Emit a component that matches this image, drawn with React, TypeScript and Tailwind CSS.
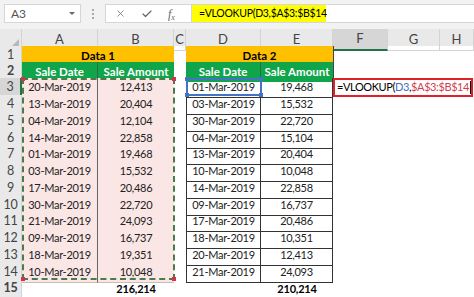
import { Check, X } from "lucide-react";

const COLS = "grid grid-cols-[22px_76px_76px_12px_75px_72px_55px_52px_1fr]";

const data1 = [
  ["20-Mar-2019", "12,413"],
  ["13-Mar-2019", "20,404"],
  ["04-Mar-2019", "12,104"],
  ["14-Mar-2019", "22,858"],
  ["01-Mar-2019", "19,468"],
  ["03-Mar-2019", "15,532"],
  ["17-Mar-2019", "20,486"],
  ["30-Mar-2019", "22,720"],
  ["21-Mar-2019", "24,093"],
  ["09-Mar-2019", "16,737"],
  ["18-Mar-2019", "19,351"],
  ["10-Mar-2019", "10,048"],
];

const data2 = [
  ["01-Mar-2019", "19,468"],
  ["03-Mar-2019", "15,532"],
  ["30-Mar-2019", "22,720"],
  ["04-Mar-2019", "15,104"],
  ["13-Mar-2019", "20,404"],
  ["10-Mar-2019", "10,048"],
  ["14-Mar-2019", "22,858"],
  ["09-Mar-2019", "16,737"],
  ["17-Mar-2019", "20,486"],
  ["18-Mar-2019", "10,351"],
  ["20-Mar-2019", "12,413"],
  ["21-Mar-2019", "24,093"],
];

function RowHead({ n, active }: { n: number; active?: boolean }) {
  return (
    <div
      className={
        "flex items-center justify-center border-b border-r border-[#d4d4d4] text-[12.5px] text-[#444] " +
        (active ? "bg-[#d6d6d6] border-r-2 border-r-[#217346]" : "bg-[#e9e9e9]")
      }
    >
      {n}
    </div>
  );
}

function FormulaBar() {
  return (
    <div className="flex h-[29px] items-start bg-[#f2f2f2] pt-[4px]">
      <div className="ml-[4px] flex h-[19px] w-[77px] items-center justify-between border border-[#d6d6d6] bg-white pl-[6px] pr-[5px] text-[12px] text-[#555]">
        <span>A3</span>
        <span className="h-0 w-0 border-x-[3px] border-t-[3px] border-x-transparent border-t-[#666]" />
      </div>
      <div className="ml-[10px] flex h-[19px] w-[4px] flex-col items-center justify-center gap-[2px]">
        <span className="h-[2px] w-[2px] bg-[#aaa]" />
        <span className="h-[2px] w-[2px] bg-[#aaa]" />
        <span className="h-[2px] w-[2px] bg-[#aaa]" />
      </div>
      <div className="ml-[10px] flex h-[19px] w-[87px] items-center border border-[#d6d6d6] bg-white text-[#666]">
        <X className="ml-[9px]" size={11} strokeWidth={1.6} />
        <Check className="ml-[15px]" size={12} strokeWidth={2.4} />
        <span className="ml-[15px] font-['Liberation_Serif'] text-[12px] italic">
          f<sub className="text-[8px]">x</sub>
        </span>
      </div>
      <div className="flex h-[19px] flex-1 border-y border-[#d6d6d6] bg-white">
        <div className="flex h-full w-[134px] items-center bg-[#ffff00] pl-[7px] text-[10.5px] tracking-[-0.3px] text-black">
          =VLOOKUP(D3,$A$3:$B$14
        </div>
      </div>
    </div>
  );
}

function ColHeaders() {
  const letters = ["A", "B", "C", "D", "E", "F", "G", "H"];
  return (
    <div className={COLS + " h-[17px] bg-[#e9e9e9] text-[13px] text-[#444]"}>
      <div className="relative border-b border-r border-[#d4d4d4]">
        <span className="absolute bottom-[2px] right-[2px] h-0 w-0 border-b-[9px] border-l-[9px] border-b-[#b8b8b8] border-l-transparent" />
      </div>
      {letters.map((l) => (
        <div
          key={l}
          className={
            "flex items-center justify-center border-r border-[#d4d4d4] " +
            (l === "F" ? "border-b-2 border-b-[#217346] bg-[#d6d6d6]" : "border-b")
          }
        >
          {l}
        </div>
      ))}
    </div>
  );
}

export default function App() {
  return (
    <div className="h-[297px] w-[474px] overflow-hidden bg-white font-['Lato',sans-serif]">
      <FormulaBar />
      <ColHeaders />
      <div className="relative">
        {/* row 1 */}
        <div className={COLS + " h-[16px] text-[11.5px]"}>
          <RowHead n={1} />
          <div className="col-span-2 flex items-center justify-center border-b border-[#888] bg-[#ffc000] font-bold text-black">
            Data 1
          </div>
          <div />
          <div className="col-span-2 flex items-center justify-center border-b border-[#888] bg-[#ffc000] font-bold text-black">
            Data 2
          </div>
          <div className="border-l border-[#444]" />
        </div>
        {/* row 2 */}
        <div className={COLS + " h-[16px] text-[11.5px] font-bold text-white"}>
          <RowHead n={2} />
          <div className="flex items-center justify-center border-r border-[#2b6e3f] bg-[#10a54a]">Sale Date</div>
          <div className="flex items-center justify-center bg-[#10a54a]">Sale Amount</div>
          <div />
          <div className="flex items-center justify-center border-r border-[#2b6e3f] bg-[#10a54a]">Sale Date</div>
          <div className="flex items-center justify-center bg-[#10a54a]">Sale Amount</div>
          <div className="border-l border-[#444]" />
        </div>
        {/* rows 3-14 */}
        {data1.map((r, i) => (
          <div
            key={i}
            className={
              COLS + " text-[11px] tracking-[-0.3px] text-[#222] " + (i % 4 === 3 ? "h-[16px]" : "h-[17px]")
            }
          >
            <RowHead n={i + 3} active={i === 0} />
            <div className="flex items-center justify-center border-b border-r border-[#cbbcbc] border-r-[#666] bg-[#fbe6e6]">
              {r[0]}
            </div>
            <div className="flex items-center justify-center border-b border-[#cbbcbc] bg-[#fbe6e6]">{r[1]}</div>
            <div />
            <div className="flex items-center justify-center border-b border-l border-r border-[#333]">
              {data2[i][0]}
            </div>
            <div className="flex items-center justify-center border-b border-r border-[#333]">{data2[i][1]}</div>
            <div />
          </div>
        ))}
        {/* row 15 */}
        <div className={COLS + " h-[18px] text-[11px] font-bold tracking-[-0.2px] text-black"}>
          <RowHead n={15} />
          <div />
          <div className="flex items-center justify-center">216,214</div>
          <div />
          <div />
          <div className="flex items-center justify-center">210,214</div>
        </div>

        {/* copy range A3:B14 */}
        <div className="absolute left-[22px] top-[32px] h-[202px] w-[153px] border-2 border-dashed border-[#4b7b4b]">
          <span className="absolute -left-[3px] -top-[3px] h-[4px] w-[4px] bg-[#d9304a]" />
          <span className="absolute -right-[3px] -top-[3px] h-[4px] w-[4px] bg-[#d9304a]" />
          <span className="absolute -bottom-[3px] -left-[3px] h-[4px] w-[4px] bg-[#d9304a]" />
          <span className="absolute -bottom-[3px] -right-[3px] h-[4px] w-[4px] bg-[#d9304a]" />
        </div>
        {/* D3 reference */}
        <div className="absolute left-[186px] top-[32px] h-[18px] w-[76px] border-2 border-[#4472c4]">
          <span className="absolute -left-[3px] -top-[3px] h-[4px] w-[4px] bg-[#4472c4]" />
          <span className="absolute -right-[3px] -top-[3px] h-[4px] w-[4px] bg-[#4472c4]" />
          <span className="absolute -bottom-[3px] -left-[3px] h-[4px] w-[4px] bg-[#4472c4]" />
          <span className="absolute -bottom-[3px] -right-[3px] h-[4px] w-[4px] bg-[#4472c4]" />
        </div>
        {/* F3 edit box */}
        <div className="absolute left-[333px] top-[32px] flex h-[19px] w-[140px] items-center border-2 border-[#e0202a] bg-white pl-[2px] text-[11px] tracking-[-0.4px] text-black">
          <span>=VLOOKUP(</span>
          <span className="text-[#3f6fc4]">D3</span>
          <span>,</span>
          <span className="text-[#d2404e]">$A$3:$B$14</span>
          <span className="ml-px h-[13px] w-px bg-black" />
        </div>
      </div>
    </div>
  );
}
